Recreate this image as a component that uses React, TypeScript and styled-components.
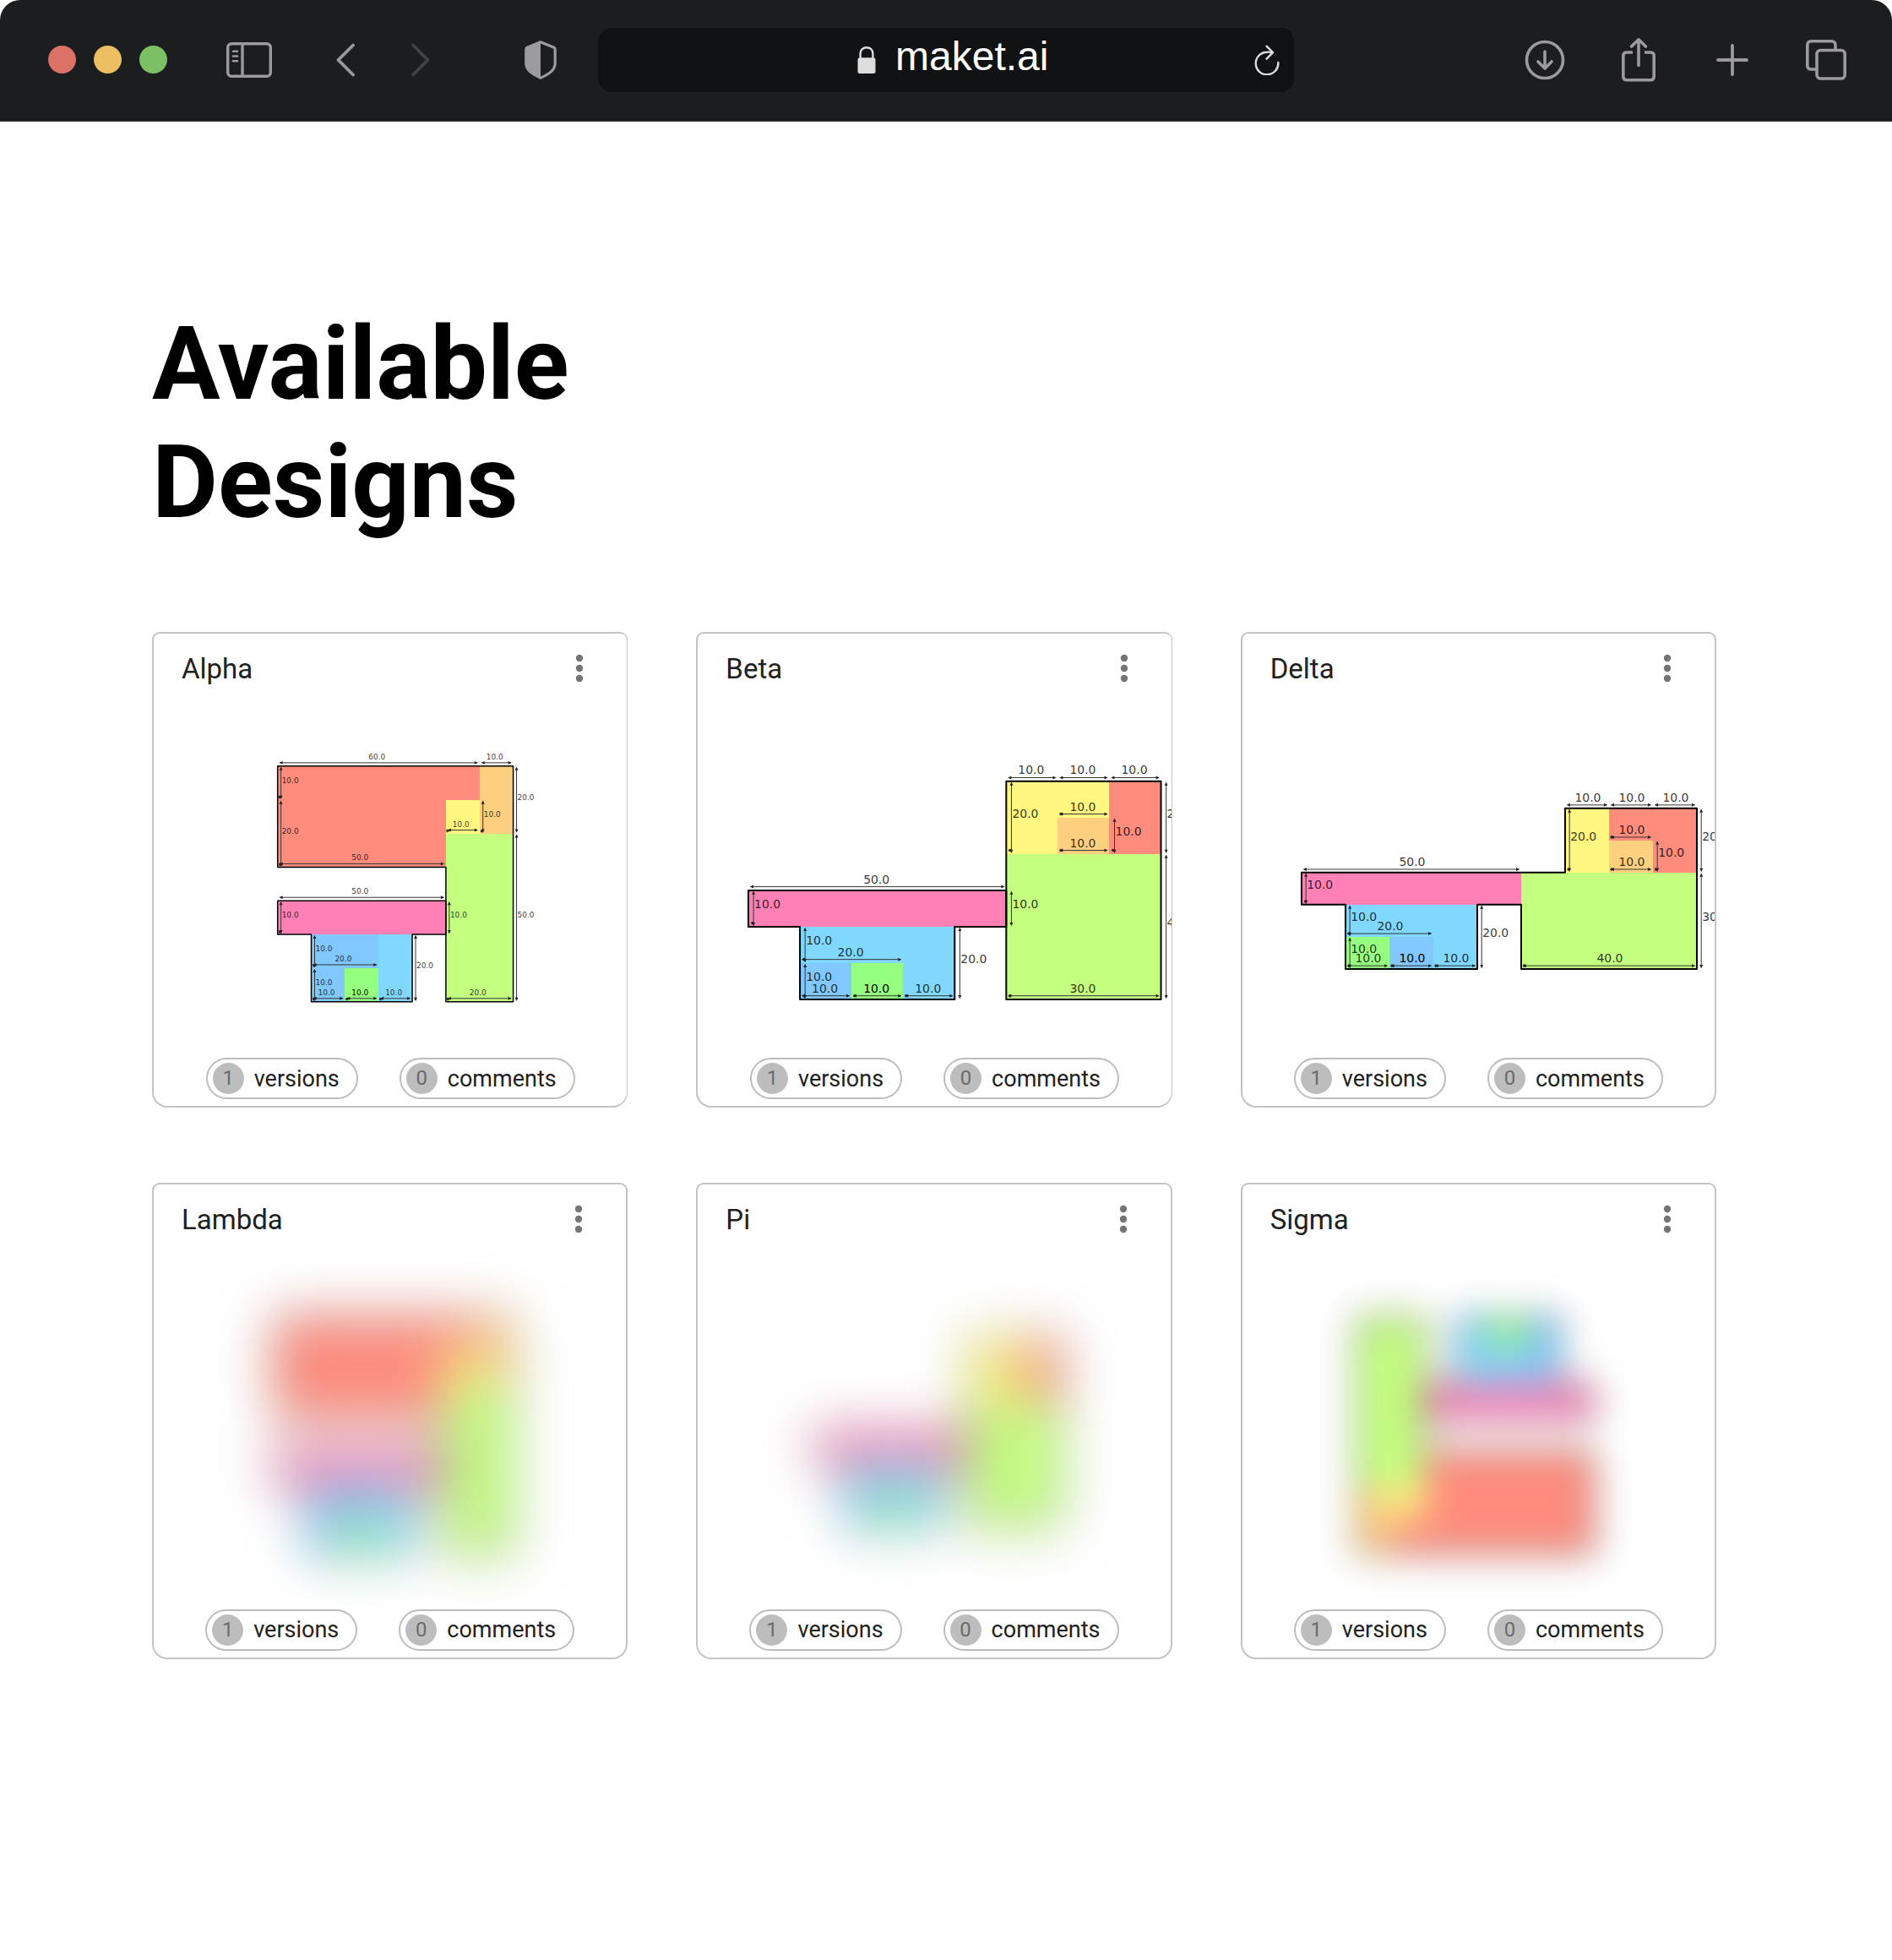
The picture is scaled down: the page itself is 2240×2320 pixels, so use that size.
import React, { useId } from "react";
import styled, { createGlobalStyle, css } from "styled-components";

const GlobalStyle = createGlobalStyle`
  *, *::before, *::after { box-sizing: border-box; }
  body {
    margin: 0;
    background: #ffffff;
    font-family: Roboto, "Liberation Sans", sans-serif;
    color: #212121;
  }
  button {
    padding: 0;
    border: 0;
    background: none;
    color: inherit;
    font: inherit;
    cursor: pointer;
  }
`;

/* ---------- browser chrome ---------- */

const Window = styled.div`
  min-height: 100vh;
  display: flex;
  flex-direction: column;
  border-radius: 24px;
  overflow: hidden;
  background: #ffffff;
`;

const Toolbar = styled.header`
  height: 144px;
  padding-bottom: 2px;
  display: grid;
  grid-template-columns: minmax(0, 1fr) minmax(0, 824px) minmax(0, 1fr);
  align-items: center;
  background: #1c1d20;
  border-bottom: 1px solid #37383b;
  color: #9b9b9e;
`;

const ToolbarStart = styled.div`
  display: flex;
  align-items: center;
  padding: 0 49px 0 57px;
`;

const ToolbarEnd = styled.div`
  display: flex;
  align-items: center;
  justify-content: flex-end;
  gap: 63px;
  padding-right: 54px;
`;

const Lights = styled.div`
  display: flex;
  gap: 21px;
  margin-right: 70px;
`;

const Light = styled.button<{ $color: string }>`
  width: 33px;
  height: 33px;
  border-radius: 50%;
  background: ${(p) => p.$color};
`;

const History = styled.div`
  display: flex;
  gap: 67px;
  margin-left: 76px;
`;

const ToolButton = styled.button<{ $push?: boolean }>`
  display: flex;
  align-items: center;
  justify-content: center;
  ${(p) => p.$push && css`margin-left: auto;`}
  &:disabled { color: #424243; }
`;

const AddressBar = styled.form`
  height: 76px;
  display: flex;
  align-items: center;
  gap: 23px;
  padding: 0 17px 0 307px;
  border-radius: 16px;
  background: #111214;
  color: #dddddd;
`;

const AddressInput = styled.input`
  flex: 1;
  min-width: 0;
  height: 76px;
  padding: 0 0 9px;
  border: 0;
  outline: 0;
  background: transparent;
  color: #ffffff;
  font: 48px "Liberation Sans", Arial, sans-serif;
`;

const Stroke = styled.svg`
  display: block;
  fill: none;
  stroke: currentColor;
  stroke-linecap: round;
  stroke-linejoin: round;
`;

const SidebarIcon = () => (
  <Stroke width="54" height="42" viewBox="0 0 54 42" strokeWidth="3.4">
    <rect x="1.7" y="1.7" width="50.6" height="38.6" rx="4.5" />
    <path d="M19 2V40" />
    <path d="M8 10.7H13M8 16.5H13M8 22.3H13" strokeWidth="2.6" />
  </Stroke>
);

const BackIcon = () => (
  <Stroke width="22" height="40" viewBox="0 0 22 40" strokeWidth="3.8">
    <path d="M20 2.5L2.5 20L20 37.5" />
  </Stroke>
);

const ForwardIcon = () => (
  <Stroke width="22" height="40" viewBox="0 0 22 40" strokeWidth="3.8">
    <path d="M2 2.5L19.5 20L2 37.5" />
  </Stroke>
);

const ShieldIcon = () => (
  <Stroke width="38" height="46" viewBox="0 0 38 46" strokeWidth="3.2">
    <path d="M19 1.8L35 8.2Q36.2 8.8 36.2 10.2V27C36.2 35 29 39.5 19 44.2C9 39.5 1.8 35 1.8 27V10.2Q1.8 8.8 3 8.2Z" />
    <path d="M19 1.8V44.2C9 39.5 1.8 35 1.8 27V10.2Q1.8 8.8 3 8.2Z" fill="currentColor" stroke="none" />
  </Stroke>
);

const LockIcon = () => (
  <Stroke width="22" height="32" viewBox="0 0 22 32" strokeWidth="2.4">
    <path d="M3.6 15V8.5C3.6 3.8 6.8 1.3 11 1.3S18.4 3.8 18.4 8.5V15" />
    <rect x="0.5" y="13.3" width="21" height="18.7" rx="2.5" fill="currentColor" stroke="none" />
  </Stroke>
);

const ReloadIcon = () => (
  <Stroke width="30" height="36" viewBox="0 0 30 36" strokeWidth="2.4">
    <path d="M28.3 21A13.3 13.3 0 1 1 15 8.7Q18.5 8.5 21.5 9.3" />
    <path d="M14.5 1.7L22 9.2L14.5 16.7" />
  </Stroke>
);

const DownloadIcon = () => (
  <Stroke width="48" height="48" viewBox="0 0 48 48" strokeWidth="3.6">
    <circle cx="24" cy="24" r="21.5" />
    <path d="M24 14V34M16 26L24 34L32 26" />
  </Stroke>
);

const ShareIcon = () => (
  <Stroke width="48" height="54" viewBox="0 0 48 54" strokeWidth="3.6">
    <path d="M17 18H10Q5.8 18 5.8 22V46.5Q5.8 50.7 10 50.7H38Q42.2 50.7 42.2 46.5V22Q42.2 18 38 18H31" strokeLinecap="butt" />
    <path d="M24 33.5V3M15.5 11L24 2.8L32.5 11" />
  </Stroke>
);

const PlusIcon = () => (
  <Stroke width="48" height="48" viewBox="0 0 48 48" strokeWidth="3.8">
    <path d="M24 7V41M7 24H41" />
  </Stroke>
);

const TabsIcon = () => (
  <Stroke width="48" height="48" viewBox="0 0 48 48" strokeWidth="3.6">
    <path d="M35 11V6.5Q35 1.8 30.3 1.8H6.5Q1.8 1.8 1.8 6.5V30.5Q1.8 35 6.5 35H11" />
    <rect x="13" y="12.5" width="33.2" height="33.5" rx="4.5" />
  </Stroke>
);

/* ---------- page ---------- */

const Main = styled.main`
  flex: 1;
  padding: 217px 208px 160px 180px;
`;

const Heading = styled.h1`
  max-width: 5em;
  margin: 0 0 107px;
  font-size: 120px;
  line-height: 140px;
  font-weight: 700;
  color: #000000;
`;

const Grid = styled.section`
  display: grid;
  grid-template-columns: repeat(3, minmax(0, 1fr));
  gap: 89px 81px;
`;

const Card = styled.article<{ $trimmed?: boolean }>`
  aspect-ratio: 1;
  display: flex;
  flex-direction: column;
  overflow: hidden;
  border: 2px solid #c4c4c4;
  border-right-width: ${(p) => (p.$trimmed ? 1 : 2)}px;
  border-radius: 9px 9px 18px 18px;
  background: #ffffff;
`;

const CardHeader = styled.div`
  display: flex;
  align-items: flex-start;
  justify-content: space-between;
  padding: 17px 32px 0 33px;
`;

const CardTitle = styled.h2`
  margin: 0;
  font-size: 33px;
  line-height: 50px;
  font-weight: 400;
`;

const MenuButton = styled.button`
  width: 48px;
  height: 48px;
  color: #757575;
`;

const CardFooter = styled.div`
  display: flex;
  justify-content: center;
  gap: 49px;
  padding-bottom: 8px;
`;

const Pill = styled.button`
  height: 49px;
  display: flex;
  align-items: center;
  gap: 12px;
  padding: 0 20px 0 6px;
  border: 2px solid #bdbdbd;
  border-radius: 25px;
  background: #ffffff;
  font-size: 27px;
  line-height: 32px;
`;

const Count = styled.span`
  width: 37px;
  height: 37px;
  border-radius: 50%;
  background: #bdbdbd;
  color: #6b6b6b;
  font-size: 24px;
  line-height: 37px;
  text-align: center;
`;

const PlanSvg = styled.svg`
  display: block;
  flex: 1;
  width: 100%;
  min-height: 0;
`;

const Blurred = styled.g<{ $blur: number }>`
  ${(p) => p.$blur > 0 && css`filter: blur(${p.$blur}px);`}
`;

const DimText = styled.text<{ $size: number; $strong?: boolean }>`
  font-family: "DejaVu Sans", sans-serif;
  font-size: ${(p) => p.$size}px;
  fill: #000000;
  fill-opacity: ${(p) => (p.$strong ? 1 : 0.8)};
`;

/* ---------- floor plans ---------- */

const RED = "#ff8c7d";
const ORANGE = "#ffcf80";
const YELLOW = "#fff780";
const LIME = "#c4ff80";
const PINK = "#ff80b5";
const SKY = "#80d8ff";
const BLUE = "#80c8ff";
const GREEN = "#96ff80";

type Room = [color: string, x: number, y: number, w: number, h: number];
/* axis, position across the axis, from, to, drawn in full black */
type Dim = ["h" | "v", number, number, number, boolean?];

interface Plan {
  rooms: Room[];
  outline: [number, number][][];
  dims: Dim[];
  marks: [number, number][];
}

const hall: Plan = {
  rooms: [
    [RED, 0, 0, 60, 10], [RED, 0, 10, 50, 20], [ORANGE, 60, 0, 10, 20],
    [YELLOW, 50, 10, 10, 10], [LIME, 50, 20, 20, 50], [PINK, 0, 40, 50, 10],
    [BLUE, 10, 50, 20, 20], [SKY, 30, 50, 10, 20], [GREEN, 20, 60, 10, 10],
  ],
  outline: [
    [[0, 0], [70, 0], [70, 70], [50, 70], [50, 30], [0, 30]],
    [[0, 40], [50, 40], [50, 50], [40, 50], [40, 70], [10, 70], [10, 50], [0, 50]],
  ],
  dims: [
    ["h", -1, 0, 60], ["h", -1, 60, 70], ["v", 1, 0, 10], ["v", 1, 10, 30],
    ["h", 29, 0, 50], ["h", 19, 50, 60], ["v", 61, 10, 20], ["v", 71, 0, 20],
    ["v", 71, 20, 70], ["h", 39, 0, 50], ["v", 1, 40, 50], ["v", 51, 40, 50],
    ["v", 11, 50, 60], ["v", 11, 60, 70], ["h", 59, 10, 30], ["h", 69, 10, 20],
    ["h", 69, 20, 30, true], ["h", 69, 30, 40], ["v", 41, 50, 70], ["h", 69, 50, 70],
  ],
  marks: [[0.6, 9.2], [0.8, 29.2], [50.5, 19.2], [60.7, 19.3], [0.7, 49.2], [10.8, 59.2], [10.8, 69.2], [20.6, 69.2], [30.6, 69.2], [50.6, 69.2]],
};

const tower: Plan = {
  rooms: [
    [YELLOW, 50, 0, 20, 20], [ORANGE, 60, 10, 10, 10], [RED, 70, 0, 10, 20],
    [LIME, 50, 20, 30, 40], [PINK, 0, 30, 50, 10], [SKY, 10, 40, 30, 20],
    [BLUE, 10, 50, 10, 10], [GREEN, 20, 50, 10, 10],
  ],
  outline: [
    [[50, 0], [80, 0], [80, 60], [50, 60]],
    [[0, 30], [50, 30], [50, 40], [40, 40], [40, 60], [10, 60], [10, 40], [0, 40]],
  ],
  dims: [
    ["h", -1, 50, 60], ["h", -1, 60, 70], ["h", -1, 70, 80], ["h", 9, 60, 70],
    ["h", 19, 60, 70], ["v", 51, 0, 20], ["v", 71, 10, 20], ["v", 81, 0, 20],
    ["v", 81, 20, 60], ["h", 29, 0, 50], ["v", 1, 30, 40], ["v", 51, 30, 40],
    ["v", 11, 40, 50], ["v", 11, 50, 60], ["h", 49, 10, 30], ["h", 59, 10, 20],
    ["h", 59, 20, 30, true], ["h", 59, 30, 40], ["v", 41, 40, 60], ["h", 59, 50, 80],
  ],
  marks: [[50.7, 19], [60.6, 9], [60.6, 19], [70.7, 19], [0.8, 39], [10.8, 49], [10.8, 59], [20.6, 59], [30.6, 59], [50.7, 59]],
};

const terrace: Plan = {
  rooms: [
    [YELLOW, 60, 0, 10, 20], [RED, 70, 0, 20, 20], [ORANGE, 70, 10, 10, 10],
    [LIME, 50, 20, 40, 30], [PINK, 0, 20, 50, 10], [SKY, 10, 30, 30, 20],
    [BLUE, 20, 40, 10, 10], [GREEN, 10, 40, 10, 10],
  ],
  outline: [
    [[0, 20], [60, 20], [60, 0], [90, 0], [90, 50], [50, 50], [50, 30], [40, 30], [40, 50], [10, 50], [10, 30], [0, 30]],
  ],
  dims: [
    ["h", -1, 60, 70], ["h", -1, 70, 80], ["h", -1, 80, 90], ["h", 9, 70, 80],
    ["h", 19, 70, 80], ["v", 61, 0, 20], ["v", 81, 10, 20], ["v", 91, 0, 20],
    ["v", 91, 20, 50], ["h", 19, 0, 50], ["v", 1, 20, 30], ["v", 11, 30, 40],
    ["v", 11, 40, 50], ["h", 39, 10, 30], ["h", 49, 10, 20], ["h", 49, 20, 30, true],
    ["h", 49, 30, 40], ["v", 41, 30, 50], ["h", 49, 50, 90],
  ],
  marks: [[60.8, 19], [70.6, 9], [70.6, 19], [80.7, 19], [0.9, 29], [10.8, 39], [10.8, 49], [20.6, 49], [30.6, 49], [50.7, 49]],
};

interface Placement {
  x: number;
  y: number;
  sx: number;
  sy: number;
  text: number;
  textShift: number;
  line: number;
  blur: number;
}

const PlanDrawing = ({ plan, at, label }: { plan: Plan; at: Placement; label: string }) => {
  const arrow = useId();
  const px = (x: number) => at.x + x * at.sx;
  const py = (y: number) => at.y + y * at.sy;
  return (
    <PlanSvg viewBox="0 65 559 437" role="img" aria-label={label}>
      <defs>
        <marker id={arrow} markerUnits="userSpaceOnUse" markerWidth="6" markerHeight="6" refX="4" refY="3" orient="auto-start-reverse">
          <path d="M0.5 1L4.5 3L0.5 5Z" fill="#222222" />
        </marker>
      </defs>
      <Blurred $blur={at.blur}>
        {plan.rooms.map(([color, x, y, w, h], i) => (
          <rect
            key={i}
            x={Math.min(px(x), px(x + w))}
            y={Math.min(py(y), py(y + h))}
            width={Math.abs(w * at.sx)}
            height={Math.abs(h * at.sy)}
            fill={color}
            shapeRendering="crispEdges"
          />
        ))}
        {plan.outline.map((points, i) => (
          <polygon
            key={i}
            points={points.map(([x, y]) => `${px(x)},${py(y)}`).join(" ")}
            fill="none"
            stroke="#000000"
            strokeWidth={at.line}
            strokeLinejoin="round"
          />
        ))}
      </Blurred>
      {at.blur === 0 && (
        <>
          {plan.marks.map(([x, y], i) => (
            <circle key={i} cx={px(x)} cy={py(y)} r="1.8" fill="#111111" fillOpacity="0.8" />
          ))}
          {plan.dims.map(([axis, pos, from, to, strong], i) => {
            const value = (to - from).toFixed(1);
            const flat = axis === "h";
            const x1 = flat ? px(from) + 2.5 : px(pos);
            const x2 = flat ? px(to) - 2.5 : px(pos);
            const y1 = flat ? py(pos) : py(from) + 1.5;
            const y2 = flat ? py(pos) : py(to) - 1.5;
            return (
              <g key={i}>
                <line
                  x1={x1} y1={y1} x2={x2} y2={y2}
                  stroke="#333333"
                  strokeWidth="1"
                  markerStart={`url(#${arrow})`}
                  markerEnd={`url(#${arrow})`}
                />
                <DimText
                  $size={at.text}
                  $strong={strong}
                  x={flat ? (x1 + x2) / 2 + at.textShift : x1 + 1}
                  y={flat ? y1 - 4 : (y1 + y2) / 2}
                  textAnchor={flat ? "middle" : "start"}
                >
                  {value}
                </DimText>
              </g>
            );
          })}
        </>
      )}
    </PlanSvg>
  );
};

const MoreIcon = () => (
  <svg width="48" height="48" viewBox="0 0 48 48" fill="currentColor" display="block">
    <circle cx="24" cy="12" r="4.2" />
    <circle cx="24" cy="24" r="4.2" />
    <circle cx="24" cy="36" r="4.2" />
  </svg>
);

interface Design {
  name: string;
  plan: Plan;
  at: Placement;
  trimmed?: boolean;
}

const designs: Design[] = [
  { name: "Alpha", plan: hall, at: { x: 145.5, y: 155.2, sx: 4, sy: 4, text: 9, textShift: -2, line: 1.5, blur: 0 }, trimmed: true },
  { name: "Beta", plan: tower, at: { x: 58.5, y: 173.2, sx: 6.13, sy: 4.32, text: 14, textShift: -1, line: 2, blur: 0 }, trimmed: true },
  { name: "Delta", plan: terrace, at: { x: 69, y: 205.2, sx: 5.22, sy: 3.82, text: 14, textShift: 1, line: 2, blur: 0 } },
  { name: "Lambda", plan: hall, at: { x: 144, y: 155.6, sx: 4, sy: 4, text: 9, textShift: 0, line: 3, blur: 31 } },
  { name: "Pi", plan: tower, at: { x: 141, y: 181.6, sx: 3.6, sy: 3.7, text: 9, textShift: 0, line: 3, blur: 31 } },
  { name: "Sigma", plan: hall, at: { x: 415, y: 436, sx: -4, sy: -4, text: 9, textShift: 0, line: 3, blur: 22 } },
];

const DesignCard = ({ name, plan, at, trimmed }: Design) => (
  <Card $trimmed={trimmed}>
    <CardHeader>
      <CardTitle>{name}</CardTitle>
      <MenuButton type="button" aria-label={`${name} options`}>
        <MoreIcon />
      </MenuButton>
    </CardHeader>
    <PlanDrawing plan={plan} at={at} label={`${name} floor plan`} />
    <CardFooter>
      <Pill type="button"><Count>1</Count>versions</Pill>
      <Pill type="button"><Count>0</Count>comments</Pill>
    </CardFooter>
  </Card>
);

export default function App() {
  return (
    <>
      <GlobalStyle />
      <Window>
        <Toolbar>
          <ToolbarStart>
            <Lights>
              <Light type="button" aria-label="Close" $color="#dc7266" />
              <Light type="button" aria-label="Minimize" $color="#ecbf63" />
              <Light type="button" aria-label="Zoom" $color="#7bc062" />
            </Lights>
            <ToolButton type="button" aria-label="Sidebar"><SidebarIcon /></ToolButton>
            <History>
              <ToolButton type="button" aria-label="Back"><BackIcon /></ToolButton>
              <ToolButton type="button" aria-label="Forward" disabled><ForwardIcon /></ToolButton>
            </History>
            <ToolButton type="button" aria-label="Privacy report" $push><ShieldIcon /></ToolButton>
          </ToolbarStart>
          <AddressBar onSubmit={(e) => e.preventDefault()}>
            <LockIcon />
            <AddressInput aria-label="Address" defaultValue="maket.ai" />
            <ToolButton type="button" aria-label="Reload"><ReloadIcon /></ToolButton>
          </AddressBar>
          <ToolbarEnd>
            <ToolButton type="button" aria-label="Downloads"><DownloadIcon /></ToolButton>
            <ToolButton type="button" aria-label="Share"><ShareIcon /></ToolButton>
            <ToolButton type="button" aria-label="New tab"><PlusIcon /></ToolButton>
            <ToolButton type="button" aria-label="Show tabs"><TabsIcon /></ToolButton>
          </ToolbarEnd>
        </Toolbar>
        <Main>
          <Heading>Available Designs</Heading>
          <Grid aria-label="Designs">
            {designs.map((d) => (
              <DesignCard key={d.name} {...d} />
            ))}
          </Grid>
        </Main>
      </Window>
    </>
  );
}
